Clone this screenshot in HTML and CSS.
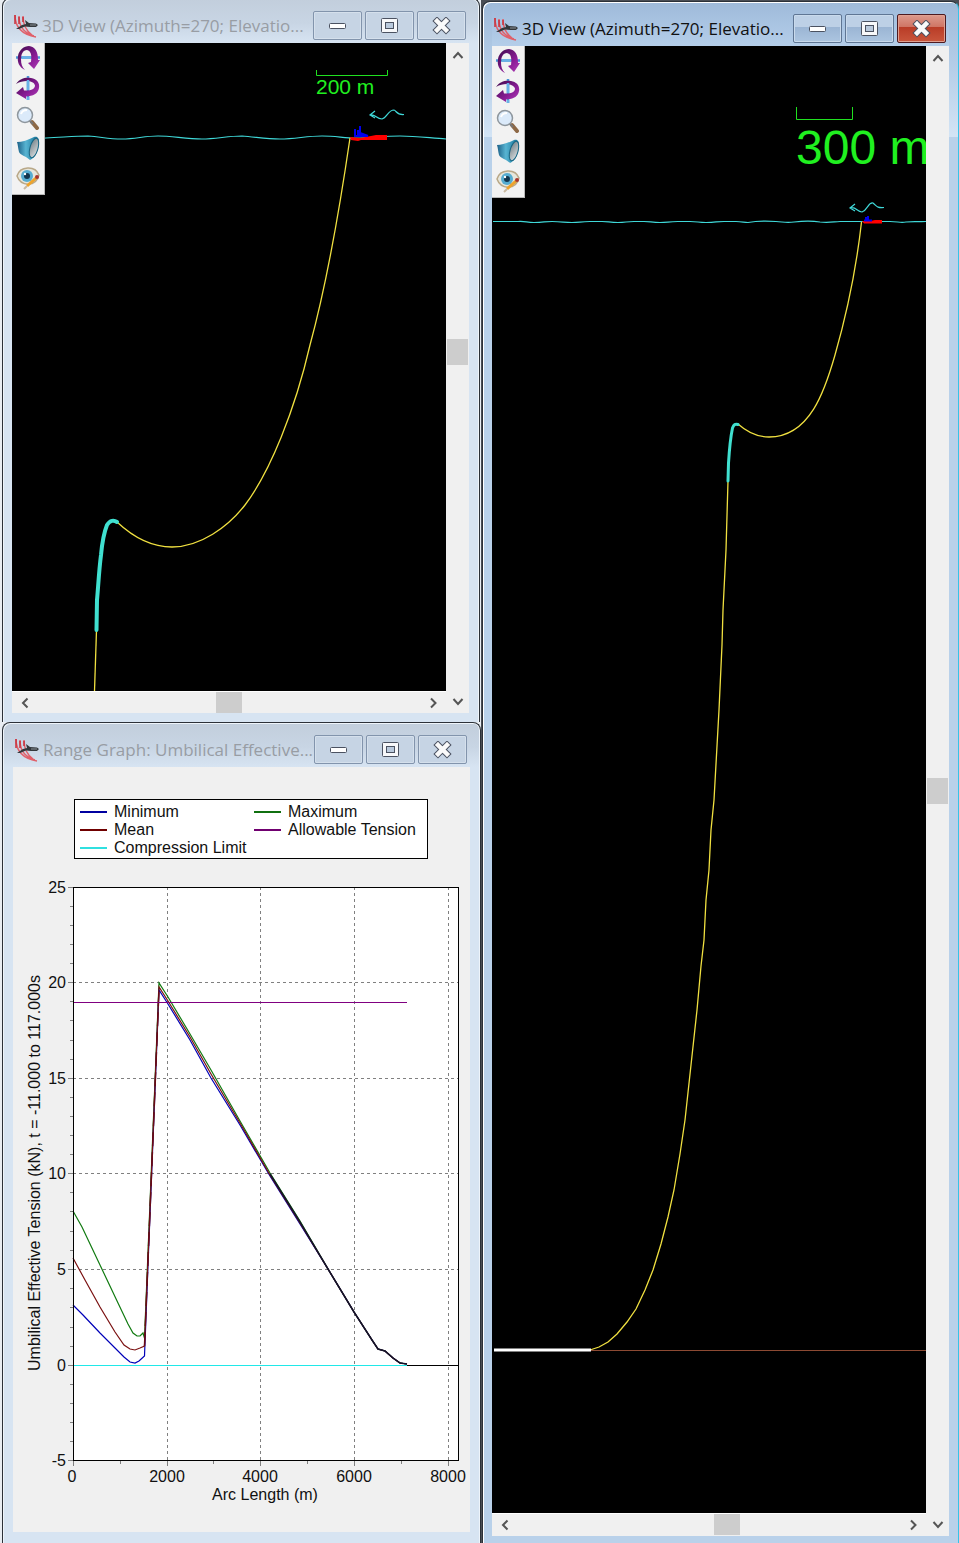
FILE: index.html
```html
<!DOCTYPE html>
<html lang="en">
<head>
    <meta charset="UTF-8">
    <meta name="viewport" content="width=device-width, initial-scale=1.0">
    <title>Umbilical Views</title>
    <link rel="stylesheet" href="styles.css">
</head>
<body>
    <!-- Shared icons -->
    <svg class="symbols" aria-hidden="true">
        <defs>
            <linearGradient id="purple" x1="0" y1="0" x2="1" y2="1">
                <stop offset="0" stop-color="#3d0a4a"/>
                <stop offset="0.6" stop-color="#8a1c96"/>
                <stop offset="1" stop-color="#b040b8"/>
            </linearGradient>
            <linearGradient id="teal" x1="0" y1="0" x2="1" y2="0">
                <stop offset="0" stop-color="#1c5f86"/>
                <stop offset="0.4" stop-color="#58b4d2"/>
                <stop offset="1" stop-color="#0f6c92"/>
            </linearGradient>
            <linearGradient id="cone" x1="0" y1="0" x2="1" y2="1">
                <stop offset="0" stop-color="#6f7d84"/>
                <stop offset="1" stop-color="#dfe3e4"/>
            </linearGradient>
        </defs>
        <symbol id="icon-app" viewBox="0 0 24 24">
            <path d="M1 1C1 11 5 20 22 23M5 2C5 11 8 18 20 22M9 2C9 9 11 16 18 21" fill="none" stroke="#e0606a" stroke-width="1.5"/>
            <path d="M1 1v9M5 3v7M9 3v5" fill="none" stroke="#c8323c" stroke-width="1.5"/>
            <path d="M2 15L8 11L12 10L11 6L15 9L22 9.5L24 11L22 13L16 13L11 12.5L5 15Z" fill="#33373b"/>
            <path d="M16 11h6" stroke="#8b9298" stroke-width="1"/>
        </symbol>
        <symbol id="icon-rotate-x" viewBox="0 0 24 24">
            <path d="M0 11.5h24" stroke="#4a96d6" stroke-width="2.5"/>
            <path d="M9 24C3 21 1 16 2 10C3 4 8 0 13 0C19 1 22 5 22 14L24 14L18 23L12 17L15 16C16 9 15 5 11 4C7 4 5 8 5 13C5 18 6 21 9 24Z" fill="url(#purple)"/>
            <path d="M6 11.5h9" stroke="#69b2e6" stroke-width="2.5"/>
        </symbol>
        <symbol id="icon-rotate-y" viewBox="0 0 24 24">
            <path d="M12 0v24" stroke="#4a96d6" stroke-width="2.5"/>
            <path d="M0 8C4 2 10 1 15 2C21 3 24 7 23 12C22 18 17 20 10 20.5L10 23L0 17L7 11L8 14.5C15 15 19 13 19 9.5C18 5 9 3 0 8Z" fill="url(#purple)"/>
            <path d="M12 4v10M12 21v3" stroke="#69b2e6" stroke-width="2.5"/>
        </symbol>
        <symbol id="icon-zoom" viewBox="0 0 24 24">
            <path d="M16 16L21 22" stroke="#8d6845" stroke-width="4" stroke-linecap="round"/>
            <path d="M13 14L17 18" stroke="#777" stroke-width="2"/>
            <circle cx="9" cy="9" r="7.5" fill="#dbeafa" stroke="#8e969d" stroke-width="1.5"/>
            <path d="M5 8C6 5 8 4 11 4" fill="none" stroke="#fff" stroke-width="2"/>
        </symbol>
        <symbol id="icon-view" viewBox="0 0 24 24">
            <path d="M1 6C6 6 12 4 18 1C22 0 23 3 23 6C23 14 19 22 14 24C10 20 4 19 3 16C2 12 2 9 1 6Z" fill="url(#teal)"/>
            <ellipse cx="18" cy="12" rx="4" ry="10" transform="rotate(16 18 12)" fill="url(#cone)" stroke="#176582"/>
        </symbol>
        <symbol id="icon-edit-view" viewBox="0 0 24 24">
            <path d="M1 10C4 0 19 -1 23 9C20 21 5 21 1 10Z" fill="#e6e6dc" stroke="#b9a888" stroke-width="1.5"/>
            <circle cx="11" cy="10" r="6" fill="#56acd0"/>
            <circle cx="11" cy="10" r="3" fill="#12354d"/>
            <circle cx="9" cy="8" r="1.2" fill="#fff"/>
            <path d="M11 20L20 12" stroke="#eda32c" stroke-width="3"/>
            <path d="M8 23L11 20" stroke="#c9b9a0" stroke-width="2"/>
            <circle cx="21" cy="11" r="2" fill="#a8342b"/>
        </symbol>
        <symbol id="icon-min" viewBox="0 0 20 18">
            <rect x="1.5" y="6.5" width="16" height="5" rx="1" fill="#fff" stroke="#4b5261"/>
        </symbol>
        <symbol id="icon-max" viewBox="0 0 20 18">
            <rect x="1.5" y="1.5" width="16" height="14" rx="1" fill="#f7f8fa" stroke="#4b5261"/>
            <rect x="5.5" y="5.5" width="8" height="6" fill="#b9c9dc" stroke="#4b5261"/>
        </symbol>
        <symbol id="icon-close" viewBox="0 0 20 18">
            <path d="M5 4L14 13M14 4L5 13" stroke="#4b5261" stroke-width="6.5" stroke-linecap="square"/>
            <path d="M5 4L14 13M14 4L5 13" stroke="#fafafa" stroke-width="4.5" stroke-linecap="square"/>
        </symbol>
        <symbol id="icon-up" viewBox="0 0 12 12"><path d="M1.5 9L6 4L10.5 9" fill="none" stroke="#555" stroke-width="2"/></symbol>
        <symbol id="icon-down" viewBox="0 0 12 12"><path d="M1.5 4L6 9L10.5 4" fill="none" stroke="#555" stroke-width="2"/></symbol>
        <symbol id="icon-left" viewBox="0 0 12 12"><path d="M8.5 1.5L4 6L8.5 10.5" fill="none" stroke="#555" stroke-width="2"/></symbol>
        <symbol id="icon-right" viewBox="0 0 12 12"><path d="M4 1.5L8.5 6L4 10.5" fill="none" stroke="#555" stroke-width="2"/></symbol>
    </svg>

    <main class="workspace">
        <div class="column">
            <section class="window window-near">
                <header class="titlebar">
                    <svg class="app-icon"><use href="#icon-app"/></svg>
                    <h2>3D View (Azimuth=270; Elevatio...</h2>
                    <div class="caption-buttons">
                        <button type="button" aria-label="Minimize"><svg><use href="#icon-min"/></svg></button>
                        <button type="button" aria-label="Maximize"><svg><use href="#icon-max"/></svg></button>
                        <button type="button" aria-label="Close"><svg><use href="#icon-close"/></svg></button>
                    </div>
                </header>
                <div class="view">
                    <div class="scene">
                        <svg viewBox="12 43 434 648">
                            <path class="sea" d="M12 138C26 140 34 139 46 138C66 137 76 136 88 136C102 137 108 139 122 139C136 139 144 136 158 136C172 136 186 139 202 139C216 139 228 136 242 136C256 137 266 139 280 139C296 139 306 136 322 136C336 136 344 138 356 138C370 138 384 136 400 136C416 136 430 138 446 139"/>
                            <path class="line" d="M350 138C338 220 325 290 310 345C295 410 270 472 245 505C228 527 200 547 172 547C150 547 133 537 117 522"/>
                            <path class="line" d="M96.5 630L94.5 691"/>
                            <path class="buoyancy wide" d="M117 522C114 520 110 520 107 525C103 535 102 544 101 555C99 570 98 590 97 600L96.5 630"/>
                            <path class="scale" d="M316.5 70V75.5H387.5V70"/>
                            <text class="scale-text" x="316" y="94">200 m</text>
                            <path class="sea" d="M375 111L370 115L375 118M370 115C376 114 376 119 382 119C387 118 388 110 394 110C397 111 396 115 404 114.5"/>
                            <path class="hull" d="M350 137L360 138L371 136L376 135H387V140H361L358 141L351 140Z"/>
                            <path class="mast" d="M355 136V129M358 136V130M360 136V126M354 136H368M360 133L368 136"/>
                        </svg>
                        <div class="toolbar">
                            <button type="button" aria-label="Rotate up"><svg><use href="#icon-rotate-x"/></svg></button>
                            <button type="button" aria-label="Rotate right"><svg><use href="#icon-rotate-y"/></svg></button>
                            <button type="button" aria-label="Zoom"><svg><use href="#icon-zoom"/></svg></button>
                            <button type="button" aria-label="Change view"><svg><use href="#icon-view"/></svg></button>
                            <button type="button" aria-label="Edit view"><svg><use href="#icon-edit-view"/></svg></button>
                        </div>
                    </div>
                    <div class="scroll vertical">
                        <button type="button" aria-label="Scroll up"><svg><use href="#icon-up"/></svg></button>
                        <div class="thumb" style="top: 44.2%"></div>
                        <button type="button" aria-label="Scroll down"><svg><use href="#icon-down"/></svg></button>
                    </div>
                    <div class="scroll horizontal">
                        <button type="button" aria-label="Scroll left"><svg><use href="#icon-left"/></svg></button>
                        <div class="thumb" style="left: 47%"></div>
                        <button type="button" aria-label="Scroll right"><svg><use href="#icon-right"/></svg></button>
                    </div>
                </div>
            </section>

            <section class="window window-graph">
                <header class="titlebar">
                    <svg class="app-icon"><use href="#icon-app"/></svg>
                    <h2>Range Graph: Umbilical Effective...</h2>
                    <div class="caption-buttons">
                        <button type="button" aria-label="Minimize"><svg><use href="#icon-min"/></svg></button>
                        <button type="button" aria-label="Maximize"><svg><use href="#icon-max"/></svg></button>
                        <button type="button" aria-label="Close"><svg><use href="#icon-close"/></svg></button>
                    </div>
                </header>
                <div class="graph">
                    <ul class="legend">
                        <li class="min">Minimum</li>
                        <li class="max">Maximum</li>
                        <li class="mean">Mean</li>
                        <li class="allowable">Allowable Tension</li>
                        <li class="limit">Compression Limit</li>
                    </ul>
                    <svg class="chart" viewBox="13 859 457 673">
                        <rect x="73" y="887" width="386" height="574" fill="#fff"/>
                        <path class="grid" d="M73 982.5H459M73 1078.5H459M73 1173.5H459M73 1269.5H459M167.5 887V1461M260.5 887V1461M354.5 887V1461M448.5 887V1461"/>
                        <path class="ticks" d="M68 887.5h5M68 982.5h5M68 1078.5h5M68 1173.5h5M68 1269.5h5M68 1365.5h5M68 1460.5h5M73.5 1461v5M167.5 1461v5M260.5 1461v5M354.5 1461v5M448.5 1461v5"/>
                        <path class="ticks" d="M70 906.5h3M70 925.5h3M70 944.5h3M70 963.5h3M70 1001.5h3M70 1020.5h3M70 1040.5h3M70 1059.5h3M70 1097.5h3M70 1116.5h3M70 1135.5h3M70 1154.5h3M70 1192.5h3M70 1211.5h3M70 1231.5h3M70 1250.5h3M70 1288.5h3M70 1307.5h3M70 1327.5h3M70 1346.5h3M70 1384.5h3M70 1403.5h3M70 1422.5h3M70 1441.5h3M120.5 1461v3M213.5 1461v3M307.5 1461v3M401.5 1461v3"/>
                        <path class="frame" d="M407 1365.5H458"/>
                        <path class="series limit" d="M73 1365.5H407"/>
                        <polyline class="series max" points="73,1211 82,1227 100,1265 118,1303 128,1324 133,1333 137,1336 140,1336 143,1333 144.5,1338 159,983 168,997 190,1034 211,1070 240,1121 270,1173 300,1221 328,1269 354,1312 372,1340 378,1349 385,1351 393,1358 400,1363 407,1364"/>
                        <polyline class="series min" points="73,1305 83,1315 100,1333 115,1348 124,1357 130,1362 135,1363 139,1361 144.5,1356 148,1265 159,990 168,1004 190,1040 211,1078 240,1125 270,1176 300,1224 328,1269 354,1312 372,1340 378,1349 385,1351 393,1358 400,1363 407,1364"/>
                        <polyline class="series mean" points="73,1258 85,1280 100,1307 115,1332 124,1345 130,1349 135,1350 140,1348 144.5,1346 159,987 168,1001 190,1037 211,1074 240,1123 270,1175 300,1223 328,1269 354,1312 372,1340 378,1349 385,1351 393,1358 400,1363 407,1364"/>
                        <polyline class="series dark" points="270,1174 300,1222 328,1269 354,1312 372,1340 378,1349 385,1351 393,1358 400,1363 407,1364"/>
                        <path class="series rise" d="M144.5 1346L159 990"/>
                        <path class="series allowable" d="M73 1002.5H407"/>
                        <rect class="frame" x="73.5" y="887.5" width="385" height="573"/>
                        <g class="labels-y">
                            <text x="66" y="893">25</text>
                            <text x="66" y="988">20</text>
                            <text x="66" y="1084">15</text>
                            <text x="66" y="1179">10</text>
                            <text x="66" y="1275">5</text>
                            <text x="66" y="1371">0</text>
                            <text x="66" y="1466">-5</text>
                        </g>
                        <g class="labels-x">
                            <text x="72" y="1482">0</text>
                            <text x="167" y="1482">2000</text>
                            <text x="260" y="1482">4000</text>
                            <text x="354" y="1482">6000</text>
                            <text x="448" y="1482">8000</text>
                            <text x="265" y="1500">Arc Length (m)</text>
                            <text transform="translate(40 1173) rotate(-90)">Umbilical Effective Tension (kN), t = -11.000 to 117.000s</text>
                        </g>
                    </svg>
                </div>
            </section>
        </div>

        <div class="column">
            <section class="window window-far active">
                <header class="titlebar">
                    <svg class="app-icon"><use href="#icon-app"/></svg>
                    <h2>3D View (Azimuth=270; Elevatio...</h2>
                    <div class="caption-buttons">
                        <button type="button" aria-label="Minimize"><svg><use href="#icon-min"/></svg></button>
                        <button type="button" aria-label="Maximize"><svg><use href="#icon-max"/></svg></button>
                        <button type="button" class="close" aria-label="Close"><svg><use href="#icon-close"/></svg></button>
                    </div>
                </header>
                <div class="view">
                    <div class="scene">
                        <svg viewBox="492 46 434 1467">
                            <path class="sea" d="M493 221.5H518C526 221 526 222.5 534 222.5C544 222.5 544 221.5 552 221.5C562 221.5 564 222.5 572 222.5C580 222.5 580 221.5 590 221.5H602C608 221.5 610 222.5 618 222.5C626 222.5 626 221.5 634 221.5H644C650 221.5 652 222.5 660 222.5C668 222.5 668 221.5 678 221.5H690C698 221.5 698 222.5 706 222.5C716 222.5 716 221.5 724 221.5H736C742 221.5 744 222.5 748 222.5C756 221 768 221 776 221.5C784 222 786 223 794 222C802 221 814 221 820 222C828 223 832 222 840 221.5H890C898 221.5 900 223 906 222C914 221 920 222 926 221.5"/>
                            <path class="line" d="M861.5 222C855 280 845 320 835 355C825 390 810 437 769 437C757 437 747 432 738 424"/>
                            <polyline class="line" points="728,481 726,550 723,610 722,645 719,710 714,800 711,830 709,870 706,900 704,940 701,966 697,1010 691,1065 685,1120 680,1154 674,1190 668,1217 661,1244 653,1270 645,1290 636,1309 627,1322 617,1334 608,1342 599,1347 590,1350"/>
                            <path class="buoyancy" d="M738 424.5C735 424 734 424 732.5 428C730 440 729 455 728.5 463L728 481"/>
                            <path class="seabed" d="M591 1350.5H926"/>
                            <path class="resting" d="M494 1350H591"/>
                            <path class="scale" d="M796.5 107V119.5H852.5V107"/>
                            <text class="scale-text big" x="796" y="164">300 m</text>
                            <path class="sea" d="M855 204L850 208L855 211M850 208C856 206 857 212 862 212C868 210 868 202 873 203C877 206 876 208 884 207.5"/>
                            <path class="hull" d="M862 221L870 221L875 220H882V223.5H864Z"/>
                            <path class="mast" d="M864 220.5H872M866 217V220M868 216V220"/>
                        </svg>
                        <div class="toolbar">
                            <button type="button" aria-label="Rotate up"><svg><use href="#icon-rotate-x"/></svg></button>
                            <button type="button" aria-label="Rotate right"><svg><use href="#icon-rotate-y"/></svg></button>
                            <button type="button" aria-label="Zoom"><svg><use href="#icon-zoom"/></svg></button>
                            <button type="button" aria-label="Change view"><svg><use href="#icon-view"/></svg></button>
                            <button type="button" aria-label="Edit view"><svg><use href="#icon-edit-view"/></svg></button>
                        </div>
                    </div>
                    <div class="scroll vertical">
                        <button type="button" aria-label="Scroll up"><svg><use href="#icon-up"/></svg></button>
                        <div class="thumb" style="top: 49.1%"></div>
                        <button type="button" aria-label="Scroll down"><svg><use href="#icon-down"/></svg></button>
                    </div>
                    <div class="scroll horizontal">
                        <button type="button" aria-label="Scroll left"><svg><use href="#icon-left"/></svg></button>
                        <div class="thumb" style="left: 51.2%"></div>
                        <button type="button" aria-label="Scroll right"><svg><use href="#icon-right"/></svg></button>
                    </div>
                </div>
            </section>
        </div>
    </main>
</body>
</html>
```

FILE: styles.css
```css
* {
    box-sizing: border-box;
}

body {
    margin: 0;
    background-color: #e9edf2;
    font-family: "Liberation Sans", Arial, sans-serif;
    color: #111;
}

.symbols {
    position: absolute;
    width: 0;
    height: 0;
}

.workspace {
    display: grid;
    grid-template-columns: 481fr 478fr;
    min-height: 100vh;
    overflow: hidden;
}

.column {
    display: flex;
    flex-direction: column;
    min-width: 0;
}

/* Windows */
.window {
    display: flex;
    flex-direction: column;
    padding: 0 9px 9px;
    border: 1px solid #2c3138;
    border-bottom: none;
    border-radius: 8px 8px 0 0;
    box-shadow: inset 1px 1px 0 #eef4fa, inset -1px 0 0 #eef4fa;
    background: linear-gradient(#c2cedc, #c8d5e4 24px, #d7e4f2 44px);
}

.window-near {
    margin: -2px 1px 0 2px;
    padding-right: 10px;
}

.window-graph {
    flex: 1;
    margin-left: 2px;
    padding: 0 10px 11px;
}

.window-far {
    flex: 1;
    margin: 1px 0 0 1px;
    padding-bottom: 7px;
    border-right-color: #35c3e8;
    box-shadow: inset 1px 1px 0 #fff;
    background:
        linear-gradient(#9fbad9, #a9c4e2 22px, #b5cee9 45px, transparent 45px) top / 457px 45px no-repeat,
        linear-gradient(#9fbad9, #b3cce7 60px, #d3e4f5 135px, #b9d1ea 135px);
}

.column:last-child {
    background-color: #4a4e55;
}

.titlebar {
    display: flex;
    align-items: flex-end;
    height: 44px;
    padding: 0 3px 3px 2px;
}

.app-icon {
    flex: none;
    width: 24px;
    height: 24px;
    margin: 0 4px 2px 0;
}

.titlebar h2 {
    flex: 1;
    min-width: 0;
    margin: 0;
    white-space: nowrap;
    font: 17px/28px "Open Sans", "Noto Sans", sans-serif;
    color: #989da4;
}

.active .titlebar h2 {
    color: #111;
}

.caption-buttons {
    display: flex;
    gap: 3px;
}

.caption-buttons button {
    display: flex;
    align-items: center;
    justify-content: center;
    width: 49px;
    height: 29px;
    padding: 0;
    border: 1px solid #8294ac;
    border-radius: 2px;
    background: #c6d4e4;
    box-shadow: inset 0 0 0 1px #d5e0ec;
}

.caption-buttons svg {
    width: 20px;
    height: 18px;
}

.active .caption-buttons button {
    border-color: #5f7694;
    background: linear-gradient(#bdd0e6 45%, #9bb5d4 45%, #acc5e0);
    box-shadow: inset 0 0 0 1px #c9daec;
}

.active .caption-buttons .close {
    border-color: #4d1a20;
    background: linear-gradient(#dd9a8d, #cf7463 45%, #b93c27 45%, #c9563c);
    box-shadow: inset 0 0 0 1px #e0a091;
}

/* 3D views */
.view {
    display: grid;
    grid-template-columns: 1fr 23px;
    grid-template-rows: auto 22px;
}

.window-far .view {
    grid-template-rows: auto 23px;
}

.scene {
    position: relative;
    background-color: #000;
}

.scene > svg {
    display: block;
    width: 100%;
}

.toolbar {
    position: absolute;
    top: 0;
    left: 0;
    display: flex;
    flex-direction: column;
    width: 33px;
    padding-bottom: 1px;
    border-right: 1px solid #b8b8b8;
    border-bottom: 1px solid #b8b8b8;
    background-color: #f2f2f2;
}

.toolbar button {
    height: 30px;
    padding: 3px 4px;
    border: none;
    background: none;
}

.toolbar svg {
    display: block;
    width: 24px;
    height: 24px;
}

.line {
    fill: none;
    stroke: #f0e040;
    stroke-width: 1.3;
}

.sea {
    fill: none;
    stroke: #3fd8d8;
    stroke-width: 1.2;
}

.buoyancy {
    fill: none;
    stroke: #40e0d0;
    stroke-width: 3;
    stroke-linecap: round;
}

.buoyancy.wide {
    stroke-width: 4;
}

.scale {
    fill: none;
    stroke: #20e020;
}

.scale-text {
    font-size: 21px;
    fill: #20f020;
}

.scale-text.big {
    font-size: 48px;
}

.hull {
    fill: #f00;
}

.mast {
    fill: none;
    stroke: #0000f0;
    stroke-width: 2;
}

.seabed {
    stroke: #8c4a33;
}

.resting {
    stroke: #fff;
    stroke-width: 3;
}

/* Scroll bars */
.scroll {
    position: relative;
    display: flex;
    justify-content: space-between;
    background-color: #f0f0f0;
}

.vertical {
    grid-column: 2;
    grid-row: 1 / 3;
    flex-direction: column;
}

.horizontal {
    grid-column: 1;
    grid-row: 2;
    border-top: 1px solid #fff;
}

.scroll button {
    display: flex;
    align-items: center;
    justify-content: center;
    width: 23px;
    height: 21px;
    padding: 0;
    border: none;
    background: none;
}

.scroll button svg {
    width: 12px;
    height: 12px;
}

.vertical button {
    height: 24px;
}

.horizontal button {
    width: 26px;
}

.thumb {
    position: absolute;
    background-color: #cdcdcd;
}

.vertical .thumb {
    left: 1px;
    width: 21px;
    height: 26px;
}

.horizontal .thumb {
    top: 0;
    width: 26px;
    height: 21px;
}

/* Range graph */
.graph {
    flex: 1;
    padding-top: 32px;
    background-color: #f0f0f0;
}

.legend {
    display: grid;
    grid-template-columns: 174px 1fr;
    width: 354px;
    margin: 0 0 0 61px;
    padding: 3px 5px 1px;
    border: 1px solid #000;
    background-color: #fff;
    list-style: none;
    font-size: 16px;
    line-height: 18px;
}

.legend li {
    display: flex;
    align-items: center;
    gap: 7px;
    white-space: nowrap;
}

.legend li::before {
    content: "";
    width: 27px;
    border-top: 2px solid #0000a0;
}

.legend .max::before {
    border-color: #107010;
}

.legend .mean::before {
    border-color: #700000;
}

.legend .allowable::before {
    border-color: #700070;
}

.legend .limit::before {
    border-color: #30e0e0;
}

.chart {
    display: block;
    width: 100%;
    font-size: 16px;
    fill: #111;
}

.grid {
    stroke: #808080;
    stroke-dasharray: 3 3;
}

.ticks {
    stroke: #808080;
}

.frame {
    fill: none;
    stroke: #000;
}

.series {
    fill: none;
    stroke-width: 1.2;
}

.series.min {
    stroke: #0000b8;
}

.series.max {
    stroke: #107a10;
}

.series.mean {
    stroke: #7a1010;
}

.series.allowable {
    stroke: #800080;
    stroke-width: 1;
}

.series.limit {
    stroke: #20e8e8;
    stroke-width: 1;
}

.series.dark {
    stroke: #141428;
    stroke-width: 1.5;
}

.series.rise {
    stroke: #6a0a14;
    stroke-width: 1.5;
    stroke-dasharray: 14 6;
}

.labels-y {
    text-anchor: end;
}

.labels-x {
    text-anchor: middle;
}
```
